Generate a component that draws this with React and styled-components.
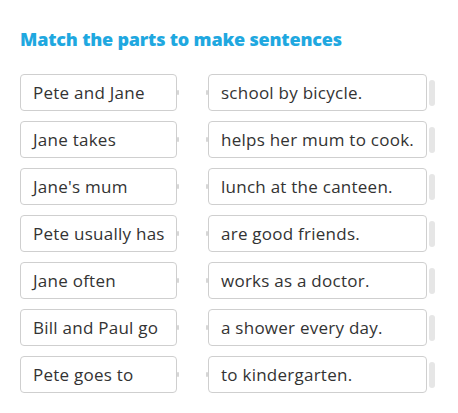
import styled, { createGlobalStyle } from 'styled-components';

const GlobalStyle = createGlobalStyle`
  body {
    margin: 0;
    background: #ffffff;
    font-family: 'Open Sans', 'Liberation Sans', sans-serif;
  }
`;

const Page = styled.div`
  padding: 27px 0 0 20px;
`;

const Title = styled.h1`
  margin: 0 0 23px;
  font-size: 18px;
  line-height: 24px;
  font-weight: 800;
  color: #1fa8e0;
  letter-spacing: -0.2px;
`;

const List = styled.div`
  display: flex;
  flex-direction: column;
  gap: 10px;
`;

const Row = styled.div`
  display: flex;
  align-items: center;
`;

const Part = styled.div`
  box-sizing: border-box;
  position: relative;
  width: ${({ $width }) => $width}px;
  height: 37px;
  margin-right: ${({ $gap }) => $gap}px;
  padding-left: 12px;
  display: flex;
  align-items: center;
  border: 1px solid #cfcfcf;
  border-radius: 4px;
  font-size: 17px;
  letter-spacing: 0.25px;
  color: #333333;

  &::after {
    content: '';
    position: absolute;
    top: 15px;
    ${({ $side }) => ($side === 'right' ? 'right: -3px;' : 'left: -3px;')}
    width: 2px;
    height: 5px;
    border-radius: 1px;
    background: #d6d6d6;
  }
`;

const Handle = styled.div`
  width: 6px;
  height: 26px;
  border-radius: 3px;
  background: #e6e6e6;
`;

const rows = [
  ['Pete and Jane', 'school by bicycle.'],
  ['Jane takes', 'helps her mum to cook.'],
  ["Jane's mum", 'lunch at the canteen.'],
  ['Pete usually has', 'are good friends.'],
  ['Jane often', 'works as a doctor.'],
  ['Bill and Paul go', 'a shower every day.'],
  ['Pete goes to', 'to kindergarten.'],
];

export default function App() {
  return (
    <>
      <GlobalStyle />
      <Page>
        <Title>Match the parts to make sentences</Title>
        <List>
          {rows.map(([left, right]) => (
            <Row key={left}>
              <Part $width={157} $gap={31} $side="right">{left}</Part>
              <Part $width={219} $gap={2} $side="left">{right}</Part>
              <Handle />
            </Row>
          ))}
        </List>
      </Page>
    </>
  );
}
